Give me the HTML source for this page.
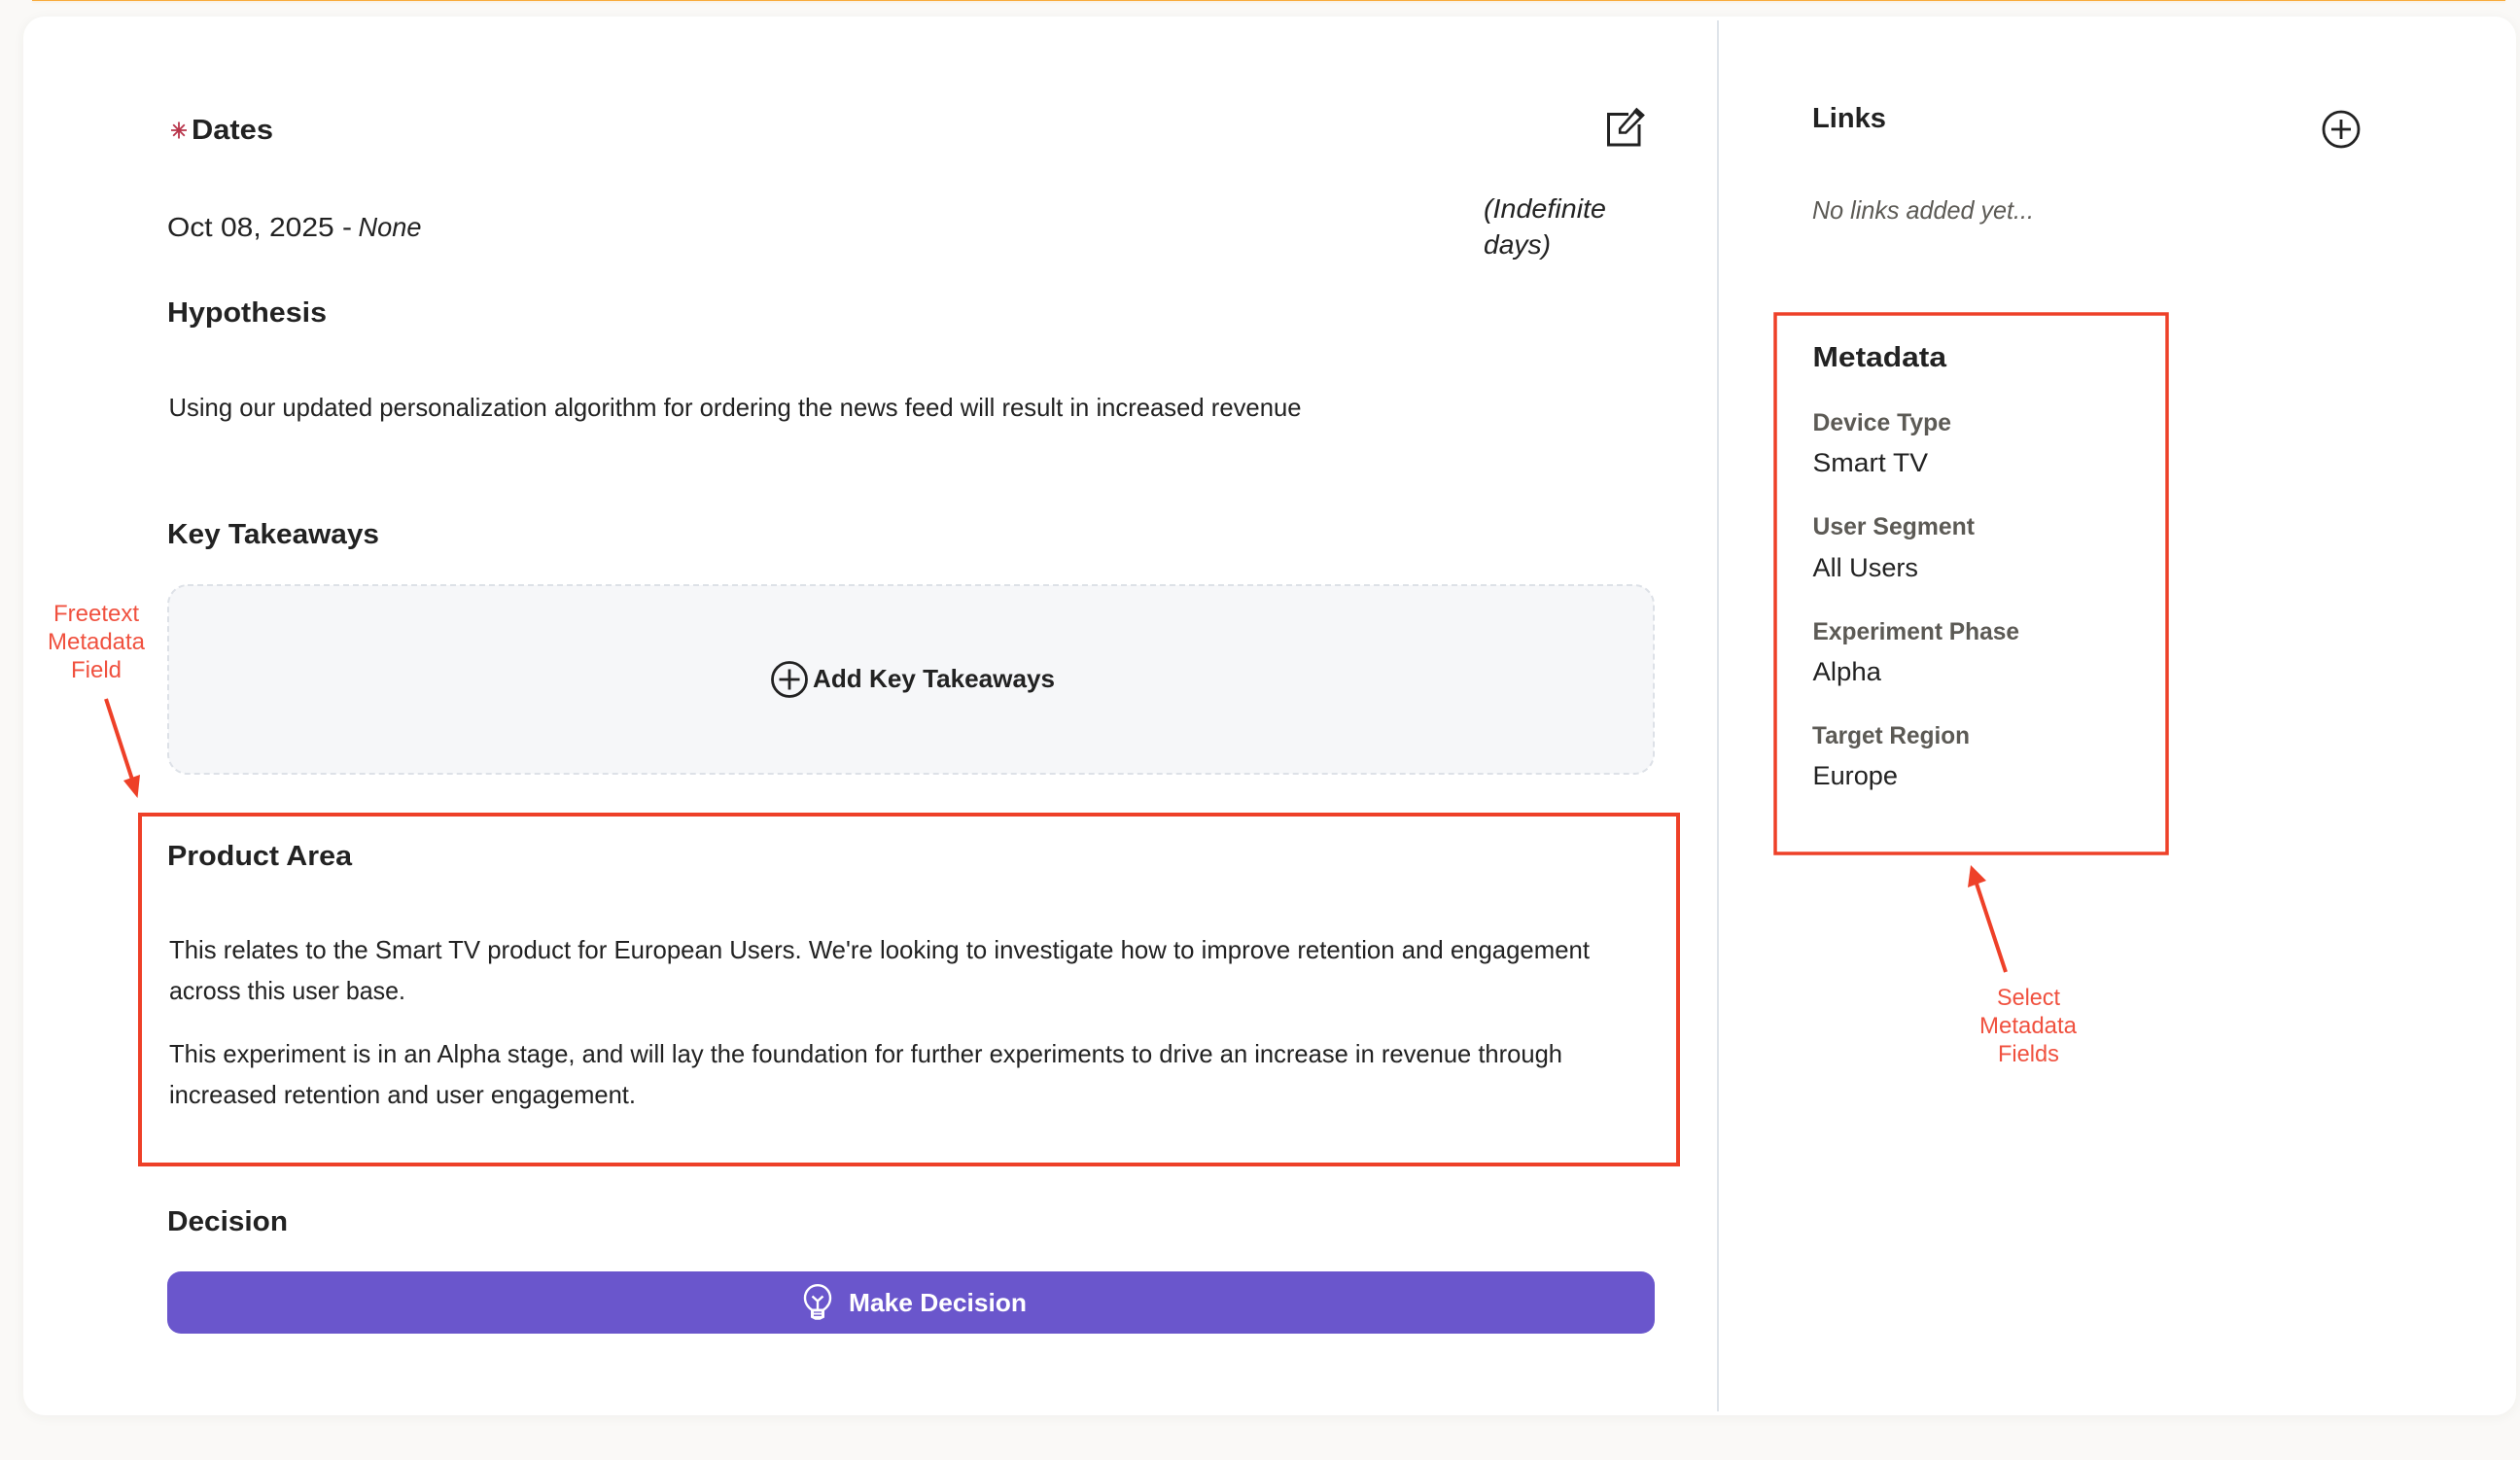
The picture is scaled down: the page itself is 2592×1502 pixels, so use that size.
<!DOCTYPE html>
<html lang="en">
<head>
<meta charset="utf-8">
<title>Experiment details</title>
<style>
html,body{margin:0;padding:0;width:2592px;height:1502px;overflow:hidden;background:#faf9f7}
#bar{position:absolute;left:33px;top:0;width:2544px;height:1px;background:#f8ab3c;box-shadow:0 1px 2px rgba(248,171,60,.25)}
#card{position:absolute;left:24px;top:17px;width:2564px;height:1439px;background:#fff;border-radius:22px;box-shadow:0 2px 12px rgba(60,50,40,.05)}
svg{position:absolute;left:0;top:0;display:block}
text{font-family:"Liberation Sans",sans-serif;fill:#222}
.h{font-size:29px;font-weight:700}
.b{font-size:26px}
.d{font-size:28px}
.l{font-size:25px;font-weight:700;fill:#5c5a55}
.v{font-size:27px}
.r{font-size:24px;fill:#f0513f}
</style>
</head>
<body>
<div id="bar"></div>
<div id="card"></div>
<svg width="2592" height="1502" viewBox="0 0 2592 1502" xmlns="http://www.w3.org/2000/svg">
  <!-- divider -->
  <rect x="1766" y="21" width="2" height="1431" fill="#dfe4ea"/>

  <!-- Dates -->
  <g stroke="#b8344a" stroke-width="1.8" fill="none">
    <path d="M184 125.5V142.5M176 134H192M178.2 128.2L189.8 139.8M189.8 128.2L178.2 139.8"/>
  </g>
  <text class="h" x="197" y="143" textLength="84" lengthAdjust="spacingAndGlyphs">Dates</text>
  <text class="d" x="172" y="243" textLength="190" lengthAdjust="spacingAndGlyphs">Oct 08, 2025 -</text>
  <text class="d" x="368.5" y="243" textLength="65" lengthAdjust="spacingAndGlyphs" font-style="italic">None</text>
  <text class="d" x="1526" y="224" textLength="126" lengthAdjust="spacingAndGlyphs" font-style="italic">(Indefinite</text>
  <text class="d" x="1526" y="261" textLength="69" lengthAdjust="spacingAndGlyphs" font-style="italic">days)</text>

  <!-- edit icon -->
  <path d="M1675 117.5H1654.5V149H1686V128" fill="none" stroke="#222" stroke-width="3"/>
  <path d="M1666.2 132.5L1683.5 112.7L1690 118.6L1672.3 136.5H1666.2Z" fill="#fff" stroke="#222" stroke-width="2.6" stroke-linejoin="miter"/>
  <path d="M1683.3 110.7L1691.3 118L1687.6 122L1679.8 114.6Z" fill="#222"/>

  <!-- Hypothesis -->
  <text class="h" x="172" y="331" textLength="164" lengthAdjust="spacingAndGlyphs">Hypothesis</text>
  <text class="b" x="173.5" y="428" textLength="1165" lengthAdjust="spacingAndGlyphs">Using our updated personalization algorithm for ordering the news feed will result in increased revenue</text>

  <!-- Key Takeaways -->
  <text class="h" x="172" y="559" textLength="218" lengthAdjust="spacingAndGlyphs">Key Takeaways</text>
  <rect x="173" y="602" width="1528" height="194" rx="20" ry="20" fill="#f6f7f9" stroke="#dde1e7" stroke-width="2" stroke-dasharray="6 4"/>
  <circle cx="812" cy="699" r="17.5" fill="none" stroke="#222" stroke-width="2.8"/>
  <path d="M812 688.5V709.5M801.5 699H822.5" stroke="#222" stroke-width="2.8" fill="none"/>
  <text class="b" x="836" y="707" textLength="249" lengthAdjust="spacingAndGlyphs" font-weight="700">Add Key Takeaways</text>

  <!-- Freetext annotation -->
  <text class="r" x="55" y="639" textLength="88" lengthAdjust="spacingAndGlyphs">Freetext</text>
  <text class="r" x="49" y="668" textLength="100" lengthAdjust="spacingAndGlyphs">Metadata</text>
  <text class="r" x="73" y="697" textLength="52" lengthAdjust="spacingAndGlyphs">Field</text>
  <path d="M109 719L136 802" stroke="#ee4028" stroke-width="4" fill="none"/>
  <path d="M141.5 821L127 803L144 797Z" fill="#ee4028"/>

  <!-- Product Area box -->
  <rect x="144" y="838" width="1582" height="360" fill="none" stroke="#ee4028" stroke-width="4"/>
  <text class="h" x="172" y="890" textLength="190" lengthAdjust="spacingAndGlyphs">Product Area</text>
  <text class="b" x="174" y="986" textLength="1461" lengthAdjust="spacingAndGlyphs">This relates to the Smart TV product for European Users. We're looking to investigate how to improve retention and engagement</text>
  <text class="b" x="174" y="1028" textLength="243" lengthAdjust="spacingAndGlyphs">across this user base.</text>
  <text class="b" x="174" y="1093" textLength="1433" lengthAdjust="spacingAndGlyphs">This experiment is in an Alpha stage, and will lay the foundation for further experiments to drive an increase in revenue through</text>
  <text class="b" x="174" y="1135" textLength="480" lengthAdjust="spacingAndGlyphs">increased retention and user engagement.</text>

  <!-- Decision -->
  <text class="h" x="172" y="1266" textLength="124" lengthAdjust="spacingAndGlyphs">Decision</text>
  <rect x="172" y="1308" width="1530" height="64" rx="14" ry="14" fill="#6a56cc"/>
  <g fill="none" stroke="#fff" stroke-width="2.4">
    <path d="M835 1347.5C831 1345 828 1340.5 828 1335.2C828 1328 833.8 1322.2 841 1322.2C848.2 1322.2 854 1328 854 1335.2C854 1340.5 851 1345 847 1347.5"/>
    <path d="M835.5 1333.5L841 1338.5L846.5 1333.5M841 1338.5V1347"/>
  </g>
  <path d="M834 1346.5H848V1355.5L843.5 1357.8H838.5L834 1355.5Z" fill="#fff"/>
  <path d="M837 1350H845M837 1353.2H845" stroke="#6a56cc" stroke-width="1.3" fill="none"/>
  <text class="b" x="873" y="1349" textLength="183" lengthAdjust="spacingAndGlyphs" font-weight="700" style="fill:#fff">Make Decision</text>

  <!-- Links -->
  <text class="h" x="1864" y="131" textLength="76" lengthAdjust="spacingAndGlyphs">Links</text>
  <circle cx="2408" cy="133" r="18" fill="none" stroke="#222" stroke-width="2.8"/>
  <path d="M2408 123V143M2398 133H2418" stroke="#222" stroke-width="2.8" fill="none"/>
  <text x="1864" y="225" font-size="26" font-style="italic" textLength="228" lengthAdjust="spacingAndGlyphs" style="fill:#5c5a55">No links added yet...</text>

  <!-- Metadata box -->
  <rect x="1826" y="323" width="403" height="555" fill="none" stroke="#ee4028" stroke-width="3.5"/>
  <text class="h" x="1864.5" y="377" textLength="137.5" lengthAdjust="spacingAndGlyphs">Metadata</text>
  <text class="l" x="1864.5" y="443" textLength="142.5" lengthAdjust="spacingAndGlyphs">Device Type</text>
  <text class="v" x="1864.5" y="485" textLength="118.5" lengthAdjust="spacingAndGlyphs">Smart TV</text>
  <text class="l" x="1864.5" y="550" textLength="166.5" lengthAdjust="spacingAndGlyphs">User Segment</text>
  <text class="v" x="1864.5" y="593" textLength="108.5" lengthAdjust="spacingAndGlyphs">All Users</text>
  <text class="l" x="1864.5" y="658" textLength="212.5" lengthAdjust="spacingAndGlyphs">Experiment Phase</text>
  <text class="v" x="1864.5" y="700" textLength="70.5" lengthAdjust="spacingAndGlyphs">Alpha</text>
  <text class="l" x="1864" y="765" textLength="162" lengthAdjust="spacingAndGlyphs">Target Region</text>
  <text class="v" x="1864.5" y="807" textLength="87.5" lengthAdjust="spacingAndGlyphs">Europe</text>

  <!-- Select annotation -->
  <path d="M2063 1000L2033 909" stroke="#ee4028" stroke-width="4" fill="none"/>
  <path d="M2027 890L2024 913L2043 906Z" fill="#ee4028"/>
  <text class="r" x="2054" y="1034" textLength="65" lengthAdjust="spacingAndGlyphs">Select</text>
  <text class="r" x="2036" y="1063" textLength="100" lengthAdjust="spacingAndGlyphs">Metadata</text>
  <text class="r" x="2055" y="1092" textLength="63" lengthAdjust="spacingAndGlyphs">Fields</text>
</svg>
</body>
</html>
